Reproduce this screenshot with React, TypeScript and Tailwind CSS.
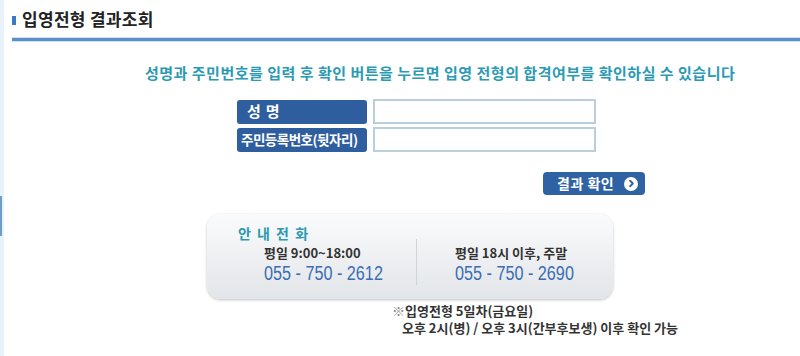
import { ChevronRight } from 'lucide-react';

const ko = { fontFamily: '"Noto Sans CJK KR", "Noto Sans", sans-serif' };
const num = { fontFamily: '"Liberation Sans", Arial, sans-serif' };

function FormRow({ label, big }: { label: string; big?: boolean }) {
  return (
    <div className="flex items-center gap-[6px]">
      <div
        className={`w-[130px] h-[24px] rounded-[3px] bg-[#2f5e9e] text-white font-bold flex items-center ${big ? 'pl-[10px] text-[15px] tracking-[5px]' : 'pl-[4px] text-[13.5px] tracking-[-0.5px]'}`}
        style={ko}
      >
        {label}
      </div>
      <input className="w-[223px] h-[25px] border-2 border-[#b9cfdc] bg-white outline-none" />
    </div>
  );
}

function PhoneCol({ when, phone }: { when: string; phone: string }) {
  return (
    <div className="flex flex-col w-[120px]">
      <span className="text-[13px] font-bold text-[#333] leading-[16px] whitespace-nowrap" style={ko}>{when}</span>
      <span
        className="inline-block text-[20px] text-[#3b6db3] leading-[22px] mt-[1px] whitespace-nowrap origin-left scale-x-[0.81]"
        style={num}
      >
        {phone}
      </span>
    </div>
  );
}

export default function App() {
  return (
    <div className="w-[800px] h-[356px] bg-white flex overflow-hidden" style={ko}>
      <div className="w-[4px] bg-[#e8f2fb] flex flex-col shrink-0">
        <div className="h-[40px] mt-[196px] w-[2px] bg-[#6f9dcb]" />
      </div>
      <div className="flex-1 flex flex-col">
        <div className="flex items-center pl-[8px] pt-[9px] h-[28px]">
          <div className="w-[4px] h-[9px] bg-[#3c7bc2] mt-[4px]" />
          <h1 className="ml-[6px] text-[17px] font-bold text-[#222] tracking-[0.3px]">입영전형 결과조회</h1>
        </div>
        <div className="ml-[8px] mt-[9px] border-y border-[#cde2f3]">
          <div className="h-[3px] bg-[#5b8fc6]" />
        </div>
        <p className="mt-[22px] ml-[141px] text-[15px] font-bold text-[#2b9ab2] tracking-[0.5px] leading-[18px] whitespace-nowrap">
          성명과 주민번호를 입력 후 확인 버튼을 누르면 입영 전형의 합격여부를 확인하실 수 있습니다
        </p>
        <div className="ml-[233px] mt-[17px] flex flex-col gap-[3px]">
          <FormRow label="성명" big />
          <FormRow label="주민등록번호(뒷자리)" />
        </div>
        <div className="ml-[539px] mt-[20px]">
          <button className="w-[102px] h-[23px] rounded-[4px] bg-[#2f62a3] text-white text-[14px] font-bold flex items-center pl-[14px] gap-[10px] tracking-[0.5px]">
            결과 확인
            <span className="w-[14px] h-[14px] rounded-full bg-white flex items-center justify-center">
              <ChevronRight className="w-[11px] h-[11px] text-[#2f62a3]" strokeWidth={4} />
            </span>
          </button>
        </div>
        <div className="ml-[203px] mt-[19px] w-[406px] h-[85px] rounded-[14px] bg-gradient-to-b from-[#fafbfc] to-[#e2e5e9] shadow-[0_1px_3px_rgba(0,0,0,0.25)] flex flex-col pl-[31px] pt-[11px]">
          <span className="text-[14px] font-bold text-[#2b9ab2] tracking-[1.5px] leading-[17px]">안 내 전 화</span>
          <div className="flex items-stretch mt-[3px] pl-[26px]">
            <PhoneCol when="평일 9:00~18:00" phone="055 - 750 - 2612" />
            <div className="w-px bg-[#d0d3d7] ml-[32px] mr-[38px] -mt-[6px] h-[46px]" />
            <PhoneCol when="평일 18시 이후, 주말" phone="055 - 750 - 2690" />
          </div>
        </div>
        <div className="ml-[388px] mt-[3px] text-[13px] font-bold text-[#333] leading-[17px]">
          <p><span className="text-[#888] font-normal">※</span>입영전형 5일차(금요일)</p>
          <p className="pl-[10px]">오후 2시(병) / 오후 3시(간부후보생) 이후 확인 가능</p>
        </div>
      </div>
    </div>
  );
}
